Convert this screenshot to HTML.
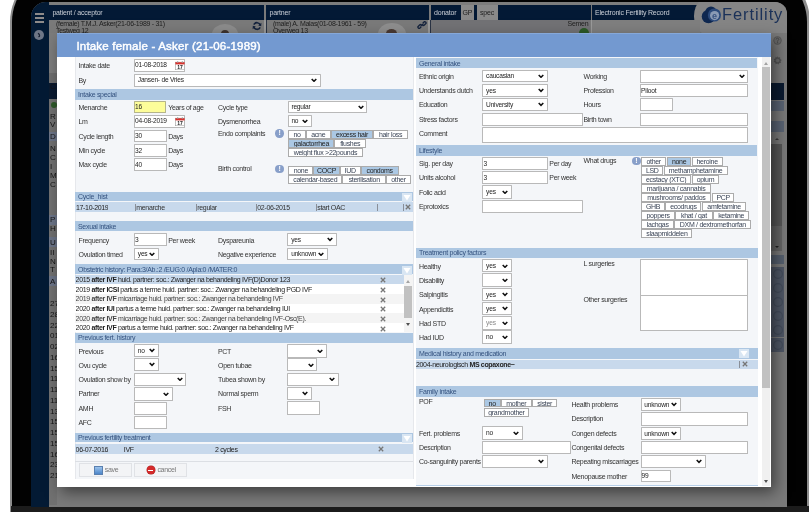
<!DOCTYPE html><html><head><meta charset="utf-8"><style>
*{margin:0;padding:0;box-sizing:border-box}
html,body{width:809px;height:512px;overflow:hidden;background:#fff}
body{position:relative;font-family:"Liberation Sans",sans-serif;will-change:transform}
div{position:absolute}
svg{display:block}
.lb{font-size:7px;line-height:9px;color:#333;letter-spacing:-0.3px;white-space:nowrap}
.sel,.inp{background:#fff;border:1px solid #b9b9b9;border-radius:0.5px}
.sel .it,.inp .it{position:absolute;left:0.1px;top:50%;margin-top:-4.7px;font-size:6.6px;line-height:9px;color:#222;letter-spacing:-0.2px;white-space:nowrap}
.sel .it{left:2.8px}
.chev{position:absolute;right:2.6px;top:50%;margin-top:-2.2px}
.hdr{background:#adc7e2}
.hdr .ht{position:absolute;left:3px;top:50%;margin-top:-4.5px;font-size:7px;line-height:9px;color:#34527f;letter-spacing:-0.3px;white-space:nowrap}
.tag{background:#fff;border:1px solid #ababab;font-size:7px;line-height:7px;color:#3a4456;text-align:center;letter-spacing:-0.3px;white-space:nowrap;overflow:hidden}
.tag.sel1{background:#abc8e4;color:#222}
.info{width:8.4px;height:8.4px;border-radius:50%;background:#889fc9;color:#fff;font-size:7px;line-height:8.4px;font-weight:700;text-align:center}
.row{font-size:7px;line-height:9px;color:#222;letter-spacing:-0.34px;white-space:nowrap;overflow:hidden}
.row b{font-weight:700}
</style></head><body>
<div style="left:10.2px;top:-33px;width:800px;height:600px;background:#8d8d8d;border-radius:55px"></div>
<div style="left:12.4px;top:-31px;width:794.3px;height:596px;background:#020202;border-radius:53px"></div>
<div style="left:11px;top:506px;width:798px;height:6px;background:#1c1c1c"></div>
<div style="left:31px;top:2px;width:756px;height:505px;background:#7a7a7a;border-radius:15px 12px 0 0;overflow:hidden"><div style="left:0;top:0;width:18px;height:505px;background:#031a34"></div></div>
<div style="left:34.6px;top:13px;width:9.4px;height:2px;background:#8e8b8a"></div>
<div style="left:34.6px;top:17px;width:9.4px;height:2px;background:#8e8b8a"></div>
<div style="left:34.6px;top:21px;width:9.4px;height:2px;background:#8e8b8a"></div>
<div style="left:34px;top:30px;width:9.8px;height:9.8px;border-radius:50%;background:#6e7686"><svg width="10" height="10" viewBox="0 0 10 10"><path d="M4 3.2 Q6.2 4.6 5.4 6.6 L4.2 6.8" fill="none" stroke="#1a2233" stroke-width="1.1"/></svg></div>
<div style="left:49px;top:2px;width:726px;height:2.5px;background:#7d7d7d"></div>
<div style="left:49px;top:4.5px;width:215px;height:15.5px;background:#031935"></div>
<div style="left:266px;top:4.5px;width:163px;height:15.5px;background:#031935"></div>
<div style="left:431px;top:4.5px;width:30px;height:15.5px;background:#031935"></div>
<div style="left:474.2px;top:4.5px;width:3.2px;height:15.5px;background:#031935"></div>
<div style="left:498px;top:4.5px;width:92.5px;height:15.5px;background:#031935"></div>
<div style="left:592px;top:4.5px;width:120px;height:15.5px;background:#031935"></div>
<div style="left:660px;top:2px;width:127px;height:40px;overflow:hidden;border-radius:0 12px 0 0"><div style="left:34.4px;top:-7.6px;width:43.2px;height:43.2px;border-radius:50%;background:#858585"></div><div style="left:56px;top:0;width:71px;height:31px;background:#858585"></div></div>
<div style="left:461px;top:4.5px;width:13.2px;height:15.5px;background:#898989"></div>
<div style="left:477.4px;top:4.5px;width:20.6px;height:15.5px;background:#898989"></div>
<div style="left:52.4px;top:8px;font-size:7px;line-height:9px;color:#c9ced6;letter-spacing:-0.2px;white-space:nowrap">patient / acceptor</div>
<div style="left:269.5px;top:8px;font-size:7px;line-height:9px;color:#c9ced6;letter-spacing:-0.2px;white-space:nowrap">partner</div>
<div style="left:434px;top:8px;font-size:7px;line-height:9px;color:#c9ced6;letter-spacing:-0.2px;white-space:nowrap">donator</div>
<div style="left:462.5px;top:8px;font-size:7px;line-height:9px;color:#c9ced6;letter-spacing:-0.2px;white-space:nowrap;color:#1d1d1d">GP</div>
<div style="left:480px;top:8px;font-size:7px;line-height:9px;color:#c9ced6;letter-spacing:-0.2px;white-space:nowrap;color:#1d1d1d">spec</div>
<div style="left:595px;top:8px;font-size:7px;line-height:9px;color:#c9ced6;letter-spacing:-0.2px;white-space:nowrap">Electronic Fertility Record</div>
<div style="left:700px;top:4px;width:24px;height:22px"><svg width="24" height="22" viewBox="0 0 24 22"><circle cx="8.5" cy="12.5" r="6.8" fill="#0f2850"/><circle cx="11" cy="8" r="5.6" fill="#0f2850"/><circle cx="14.4" cy="11" r="6.6" fill="#2c4a7a"/><circle cx="14.6" cy="11.6" r="4.6" fill="#8a9ab4"/><text x="14.6" y="14.6" font-size="9" font-family="Liberation Sans" font-weight="700" fill="#3b5582" text-anchor="middle">e</text></svg></div>
<div style="left:722px;top:3.5px;font-size:16.5px;line-height:20px;color:#1b3158;letter-spacing:0.9px;white-space:nowrap">Fertility</div>
<div style="left:431.2px;top:20px;width:159.3px;height:13px;background:#727275"></div>
<div style="left:592px;top:20px;width:108px;height:13px;background:#7f7f7f"></div>
<div style="left:56px;top:19.8px;font-size:7px;line-height:7px;color:#1e1e1e;letter-spacing:-0.3px;white-space:nowrap">(female) T.M.J. Asker(21-06-1989 - 31)</div>
<div style="left:56px;top:26.5px;font-size:7px;line-height:7px;color:#1e1e1e;letter-spacing:-0.3px;white-space:nowrap">Testweg 12</div>
<div style="left:273px;top:19.8px;font-size:7px;line-height:7px;color:#1e1e1e;letter-spacing:-0.3px;white-space:nowrap">(male) A. Malas(01-08-1961 - 59)</div>
<div style="left:273px;top:26.5px;font-size:7px;line-height:7px;color:#1e1e1e;letter-spacing:-0.3px;white-space:nowrap">Overweg 13</div>
<div style="left:567.6px;top:19.8px;font-size:7px;line-height:7px;color:#1e1e1e;letter-spacing:-0.3px;white-space:nowrap">Semen</div>
<div style="left:264px;top:20px;width:1.5px;height:13px;background:#9a9a9a"></div>
<div style="left:265.5px;top:20px;width:1px;height:13px;background:#2a3344"></div>
<div style="left:428.2px;top:20px;width:1.8px;height:13px;background:#9a9a9a"></div>
<div style="left:430px;top:20px;width:1.2px;height:13px;background:#2a3344"></div>
<div style="left:590.5px;top:20px;width:1.5px;height:13px;background:#9a9a9a"></div>
<div style="left:579px;top:28px;width:10px;height:10px;border-radius:50%;background:#2c5a28"></div>
<div style="left:252.2px;top:21.1px;width:10px;height:10px"><svg width="10" height="10" viewBox="0 0 10 10"><path d="M8.3 4.2 A3.5 3.5 0 0 0 1.8 3.6" fill="none" stroke="#15233d" stroke-width="1.6"/><path d="M1.7 5.8 A3.5 3.5 0 0 0 8.2 6.4" fill="none" stroke="#15233d" stroke-width="1.6"/><path d="M9.4 1.8 L9.2 5.2 L6.2 4.4 Z" fill="#15233d"/><path d="M0.6 8.2 L0.8 4.8 L3.8 5.6 Z" fill="#15233d"/></svg></div>
<div style="left:417.3px;top:20.4px;width:10px;height:10px"><svg width="10" height="10" viewBox="0 0 10 10"><path d="M4.2 6.8 L2.6 8.4 A1.6 1.6 0 0 1 0.9 6.7 L2.8 4.8 A1.6 1.6 0 0 1 4.6 4.9" fill="none" stroke="#15233d" stroke-width="1.4"/><path d="M5.8 3.2 L7.4 1.6 A1.6 1.6 0 0 1 9.1 3.3 L7.2 5.2 A1.6 1.6 0 0 1 5.4 5.1" fill="none" stroke="#15233d" stroke-width="1.4"/><path d="M3.6 6.4 L6.4 3.6" stroke="#15233d" stroke-width="1.2"/></svg></div>
<div style="left:212px;top:24px;width:26px;height:20px;border-radius:50%;background:#8c8c8c"></div>
<div style="left:220.8px;top:29.8px;width:8px;height:8px;border-radius:50%;background:#3e3430"></div>
<div style="left:378px;top:23px;width:28px;height:22px;border-radius:50%;background:#8e8e8e"></div>
<div style="left:385.6px;top:29.1px;width:11.4px;height:9px;border-radius:50%;background:#4a3a34"></div>
<div style="left:772.6px;top:36.2px;width:9px;height:9px"><svg width="9" height="9" viewBox="0 0 9 9"><circle cx="4.5" cy="4.5" r="4.2" fill="#585858"/><circle cx="4.5" cy="4.5" r="3.2" fill="#6c6c6c"/><path d="M3.2 3.4 Q3.3 2.2 4.5 2.2 Q5.8 2.2 5.8 3.4 Q5.8 4.2 4.6 4.7 L4.6 5.6" fill="none" stroke="#4a4a4a" stroke-width="1"/><circle cx="4.6" cy="6.7" r="0.6" fill="#4a4a4a"/></svg></div>
<div style="left:772.6px;top:55.7px;width:9px;height:9px"><svg width="9" height="9" viewBox="0 0 9 9"><path d="M4.5 0.3 L5.4 1.6 L7.1 1.3 L7.2 3 L8.7 3.9 L7.6 5.2 L8.1 6.8 L6.4 7 L5.5 8.5 L4.2 7.5 L2.6 8.2 L2.2 6.5 L0.6 5.9 L1.4 4.4 L0.6 2.9 L2.3 2.4 L2.6 0.8 L4 1.4 Z" fill="#555"/><circle cx="4.5" cy="4.5" r="1.8" fill="#6e6e6e"/></svg></div>
<div style="left:771px;top:82.5px;width:12.5px;height:17px;background:#0a1a30"></div>
<div style="left:771px;top:100.7px;width:12.5px;height:10px;background:#5a6474"></div>
<div style="left:771px;top:121px;width:12.5px;height:11px;background:#5a6474"></div>
<div style="left:774.5px;top:137.5px;width:0;height:0;border-left:2.5px solid transparent;border-right:2.5px solid transparent;border-bottom:2.5px solid #3a3a3a"></div>
<div style="left:771px;top:143.7px;width:10.5px;height:82.3px;background:#575757"></div>
<div style="left:771px;top:226px;width:10.5px;height:25px;background:#666"></div>
<div style="left:774.5px;top:246px;width:0;height:0;border-left:2.5px solid transparent;border-right:2.5px solid transparent;border-top:2.5px solid #222"></div>
<div style="left:771px;top:254.5px;width:12.5px;height:9.5px;background:#56606f"></div>
<div style="left:771px;top:267.0px;width:12.5px;height:14px;background:#4f5766"><div style="left:2px;top:2px;width:10px;height:10px;border-radius:50%;box-shadow:inset 0 0 0 1.2px #444d5c"></div></div>
<div style="left:771px;top:281.1px;width:12.5px;height:14px;background:#4f5766"><div style="left:2px;top:2px;width:10px;height:10px;border-radius:50%;box-shadow:inset 0 0 0 1.2px #444d5c"></div></div>
<div style="left:771px;top:295.2px;width:12.5px;height:14px;background:#4f5766"><div style="left:2px;top:2px;width:10px;height:10px;border-radius:50%;box-shadow:inset 0 0 0 1.2px #444d5c"></div></div>
<div style="left:771px;top:309.3px;width:12.5px;height:14px;background:#4f5766"><div style="left:2px;top:2px;width:10px;height:10px;border-radius:50%;box-shadow:inset 0 0 0 1.2px #444d5c"></div></div>
<div style="left:771px;top:323.4px;width:12.5px;height:14px;background:#4f5766"><div style="left:2px;top:2px;width:10px;height:10px;border-radius:50%;box-shadow:inset 0 0 0 1.2px #444d5c"></div></div>
<div style="left:771px;top:337.5px;width:12.5px;height:14px;background:#4f5766"><div style="left:2px;top:2px;width:10px;height:10px;border-radius:50%;box-shadow:inset 0 0 0 1.2px #444d5c"></div></div>
<div style="left:783.5px;top:60px;width:3.5px;height:445px;background:#7a7a7a"></div>
<div style="left:49px;top:33px;width:8px;height:40px;background:#7c7c7c"></div>
<div style="left:49px;top:73px;width:8px;height:9.5px;background:#6e6e6e"></div>
<div style="left:49px;top:82.5px;width:8px;height:16px;background:#0a1a30"></div>
<div style="left:49px;top:99px;width:8px;height:406px;background:#717171"></div>
<div style="left:50.5px;top:101.5px;width:6px;height:6px;border-radius:50%;background:#2f5a2a"></div>
<div style="left:49px;top:131.5px;width:8px;height:9.5px;background:#6c7588"></div>
<div style="left:49px;top:215px;width:8px;height:9.5px;background:#6c7588"></div>
<div style="left:49px;top:237.4px;width:8px;height:9.5px;background:#6c7588"></div>
<div style="left:49px;top:276px;width:8px;height:9.5px;background:#6c7588"></div>
<div style="left:49px;top:33px;width:8px;height:472px;overflow:hidden"><div style="left:1px;top:48.5px;font-size:8px;line-height:9px;color:#151515;white-space:nowrap">C</div><div style="left:1px;top:78.5px;font-size:8px;line-height:9px;color:#151515;white-space:nowrap">R</div><div style="left:1px;top:86.5px;font-size:8px;line-height:9px;color:#151515;white-space:nowrap">V</div><div style="left:1px;top:98.5px;font-size:8px;line-height:9px;color:#151515;white-space:nowrap">D</div><div style="left:1px;top:110.5px;font-size:8px;line-height:9px;color:#151515;white-space:nowrap">N</div><div style="left:1px;top:119.5px;font-size:8px;line-height:9px;color:#151515;white-space:nowrap">C</div><div style="left:1px;top:128.5px;font-size:8px;line-height:9px;color:#151515;white-space:nowrap">I</div><div style="left:1px;top:137.5px;font-size:8px;line-height:9px;color:#151515;white-space:nowrap">M</div><div style="left:1px;top:146.5px;font-size:8px;line-height:9px;color:#151515;white-space:nowrap">C</div><div style="left:1px;top:182.2px;font-size:8px;line-height:9px;color:#151515;white-space:nowrap">P</div><div style="left:1px;top:190.5px;font-size:8px;line-height:9px;color:#151515;white-space:nowrap">H</div><div style="left:1px;top:204.5px;font-size:8px;line-height:9px;color:#151515;white-space:nowrap">U</div><div style="left:1px;top:214.5px;font-size:8px;line-height:9px;color:#151515;white-space:nowrap">II</div><div style="left:1px;top:223.5px;font-size:8px;line-height:9px;color:#151515;white-space:nowrap">N</div><div style="left:1px;top:231.5px;font-size:8px;line-height:9px;color:#151515;white-space:nowrap">T</div><div style="left:1px;top:243.5px;font-size:8px;line-height:9px;color:#151515;white-space:nowrap">A</div><div style="left:1px;top:266.0px;font-size:8px;line-height:9px;color:#151515;white-space:nowrap">27</div><div style="left:1px;top:276.75px;font-size:8px;line-height:9px;color:#151515;white-space:nowrap">28</div><div style="left:1px;top:287.5px;font-size:8px;line-height:9px;color:#151515;white-space:nowrap">22</div><div style="left:1px;top:298.25px;font-size:8px;line-height:9px;color:#151515;white-space:nowrap">01</div><div style="left:1px;top:309.0px;font-size:8px;line-height:9px;color:#151515;white-space:nowrap">02</div><div style="left:1px;top:319.75px;font-size:8px;line-height:9px;color:#151515;white-space:nowrap">16</div><div style="left:1px;top:330.5px;font-size:8px;line-height:9px;color:#151515;white-space:nowrap">15</div><div style="left:1px;top:341.25px;font-size:8px;line-height:9px;color:#151515;white-space:nowrap">11</div><div style="left:1px;top:352.0px;font-size:8px;line-height:9px;color:#151515;white-space:nowrap">11</div><div style="left:1px;top:362.75px;font-size:8px;line-height:9px;color:#151515;white-space:nowrap">11</div><div style="left:1px;top:373.5px;font-size:8px;line-height:9px;color:#151515;white-space:nowrap">13</div><div style="left:1px;top:384.25px;font-size:8px;line-height:9px;color:#151515;white-space:nowrap">15</div><div style="left:1px;top:395.0px;font-size:8px;line-height:9px;color:#151515;white-space:nowrap">15</div><div style="left:1px;top:405.75px;font-size:8px;line-height:9px;color:#151515;white-space:nowrap">15</div><div style="left:1px;top:416.5px;font-size:8px;line-height:9px;color:#151515;white-space:nowrap">16</div><div style="left:1px;top:427.25px;font-size:8px;line-height:9px;color:#151515;white-space:nowrap">23</div><div style="left:1px;top:438.0px;font-size:8px;line-height:9px;color:#151515;white-space:nowrap">21</div></div>
<div style="left:57px;top:33.5px;width:714px;height:453.0px;background:#fff;box-shadow:4px 5px 14px rgba(0,0,0,0.5)"></div>
<div style="left:57px;top:33.2px;width:714px;height:23.8px;background:#7399d0;border-top:0.8px solid #86a8d8"></div>
<div style="left:76.4px;top:38.8px;font-size:11.5px;line-height:14px;font-weight:400;letter-spacing:0.2px;-webkit-text-stroke:0.45px #fff;color:#fff;white-space:nowrap">Intake female - Asker (21-06-1989)</div>
<div class="" style="left:75px;top:57px;width:338px;height:421.5px;background:#f4f6f9;border-left:1px solid #e6e8ec"></div>
<div class="" style="left:413px;top:57px;width:1px;height:421.5px;background:#e6e8ec"></div>
<div class="" style="left:416px;top:57px;width:341.5px;height:429.3px;background:#f4f6f9"></div>
<div class="lb" style="left:78.5px;top:61.0px;">Intake date</div>
<div class="inp" style="left:134px;top:58.6px;width:50.9px;height:13.1px;"><span class="it">01-08-2018</span></div>
<div style="left:174.6px;top:60.6px;width:10px;height:9px"><svg width="10" height="9" viewBox="0 0 10 9"><rect x="0.4" y="1.2" width="9.2" height="7.6" fill="#fff" stroke="#9a9a9a" stroke-width="0.6"/><rect x="0.4" y="1.2" width="9.2" height="2.2" fill="#d8322e"/><rect x="2.2" y="0.2" width="1" height="1.8" fill="#999"/><rect x="6.8" y="0.2" width="1" height="1.8" fill="#999"/><text x="5" y="8.2" font-size="5" font-family="Liberation Sans" font-weight="700" text-anchor="middle" fill="#222">17</text></svg></div>
<div class="lb" style="left:78.5px;top:75.5px;">By</div>
<div class="sel" style="left:134px;top:73.5px;width:186.5px;height:13.3px;"><span class="it">Jansen- de Vries</span><svg class="chev" width="6" height="4.5" viewBox="0 0 6 4.5"><path d="M0.7 0.9 L3 3.3 L5.3 0.9" fill="none" stroke="#111" stroke-width="1.5"/></svg></div>
<div class="hdr" style="left:75px;top:89px;width:338px;height:10.5px;"><span class="ht">Intake special</span></div>
<div class="lb" style="left:78.5px;top:102.5px;">Menarche</div>
<div class="inp" style="left:134px;top:100.5px;width:31.5px;height:12.3px;background:#fdfd9a;border-color:#b5b58a"><span class="it">16</span></div>
<div class="lb" style="left:168.2px;top:102.5px;">Years of age</div>
<div class="lb" style="left:78.5px;top:117.2px;">Lm</div>
<div class="inp" style="left:134px;top:114.5px;width:50.9px;height:13.3px;"><span class="it">04-08-2019</span></div>
<div style="left:174.6px;top:116.5px;width:10px;height:9px"><svg width="10" height="9" viewBox="0 0 10 9"><rect x="0.4" y="1.2" width="9.2" height="7.6" fill="#fff" stroke="#9a9a9a" stroke-width="0.6"/><rect x="0.4" y="1.2" width="9.2" height="2.2" fill="#d8322e"/><rect x="2.2" y="0.2" width="1" height="1.8" fill="#999"/><rect x="6.8" y="0.2" width="1" height="1.8" fill="#999"/><text x="5" y="8.2" font-size="5" font-family="Liberation Sans" font-weight="700" text-anchor="middle" fill="#222">17</text></svg></div>
<div class="lb" style="left:78.5px;top:131.5px;">Cycle length</div>
<div class="inp" style="left:134px;top:129.5px;width:32.5px;height:12.8px;"><span class="it">30</span></div>
<div class="lb" style="left:168.2px;top:131.5px;">Days</div>
<div class="lb" style="left:78.5px;top:145.9px;">Min cycle</div>
<div class="inp" style="left:134px;top:143.7px;width:32.5px;height:13.3px;"><span class="it">32</span></div>
<div class="lb" style="left:168.2px;top:145.9px;">Days</div>
<div class="lb" style="left:78.5px;top:160.0px;">Max cycle</div>
<div class="inp" style="left:134px;top:158.0px;width:32.5px;height:13.3px;"><span class="it">40</span></div>
<div class="lb" style="left:168.2px;top:160.0px;">Days</div>
<div class="lb" style="left:218px;top:102.5px;">Cycle type</div>
<div class="sel" style="left:287.6px;top:100.5px;width:79.9px;height:12.8px;"><span class="it">regular</span><svg class="chev" width="6" height="4.5" viewBox="0 0 6 4.5"><path d="M0.7 0.9 L3 3.3 L5.3 0.9" fill="none" stroke="#111" stroke-width="1.5"/></svg></div>
<div class="lb" style="left:218px;top:116.5px;">Dysmenorrhea</div>
<div class="sel" style="left:287.6px;top:114.5px;width:24.4px;height:12.8px;"><span class="it">no</span><svg class="chev" width="6" height="4.5" viewBox="0 0 6 4.5"><path d="M0.7 0.9 L3 3.3 L5.3 0.9" fill="none" stroke="#111" stroke-width="1.5"/></svg></div>
<div class="lb" style="left:218px;top:128.5px;">Endo complaints</div>
<div class="info" style="left:275.40000000000003px;top:129.3px">!</div>
<div class="tag" style="left:288.4px;top:130.4px;width:17.4px;height:8.6px;">no</div>
<div class="tag" style="left:305.8px;top:130.4px;width:24.9px;height:8.6px;">acne</div>
<div class="tag sel1" style="left:330.7px;top:130.4px;width:42.5px;height:8.6px;">excess hair</div>
<div class="tag" style="left:373.2px;top:130.4px;width:34.8px;height:8.6px;">hair loss</div>
<div class="tag sel1" style="left:288.4px;top:139.3px;width:46.0px;height:8.6px;">galactorrhea</div>
<div class="tag" style="left:334.4px;top:139.3px;width:31.6px;height:8.6px;">flushes</div>
<div class="tag" style="left:288.4px;top:148.4px;width:74.2px;height:8.6px;">weight flux &gt;22pounds</div>
<div class="lb" style="left:218px;top:164.0px;">Birth control</div>
<div class="info" style="left:275.40000000000003px;top:165.10000000000002px">!</div>
<div class="tag" style="left:288.4px;top:166.2px;width:24.9px;height:8.6px;">none</div>
<div class="tag sel1" style="left:313.3px;top:166.2px;width:26.5px;height:8.6px;">COCP</div>
<div class="tag" style="left:339.8px;top:166.2px;width:20.8px;height:8.6px;">IUD</div>
<div class="tag sel1" style="left:360.6px;top:166.2px;width:38.1px;height:8.6px;">condoms</div>
<div class="tag" style="left:288.4px;top:175.1px;width:53.8px;height:8.6px;">calendar-based</div>
<div class="tag" style="left:342.2px;top:175.1px;width:44.0px;height:8.6px;">sterilisation</div>
<div class="tag" style="left:386.2px;top:175.1px;width:24.5px;height:8.6px;">other</div>
<div class="hdr" style="left:75px;top:191.5px;width:338px;height:9.5px;"><span class="ht">Cycle_hist</span></div>
<div class="filt" style="left:402px;top:192.5px"><svg width="10" height="9" viewBox="0 0 10 9"><rect x="0" y="0" width="10" height="9" fill="#d9e6f3"/><path d="M1.5 2 L8.5 2 L5 7.5 Z" fill="#fff"/></svg></div>
<div class="" style="left:75px;top:202.2px;width:338px;height:9.4px;background:#c8d9ec"></div>
<div class="row" style="left:76px;top:202.7px">17-10-2019</div>
<div style="left:135px;top:203.5px;width:0.8px;height:7px;background:#8a8f98"></div>
<div class="row" style="left:136.3px;top:202.5px;color:#333">menarche</div>
<div style="left:196px;top:203.5px;width:0.8px;height:7px;background:#8a8f98"></div>
<div class="row" style="left:197.3px;top:202.5px;color:#333">regular</div>
<div style="left:256px;top:203.5px;width:0.8px;height:7px;background:#8a8f98"></div>
<div class="row" style="left:257.3px;top:202.5px;color:#333">02-06-2015</div>
<div style="left:316px;top:203.5px;width:0.8px;height:7px;background:#8a8f98"></div>
<div class="row" style="left:317.3px;top:202.5px;color:#333">start OAC</div>
<div style="left:377px;top:203.5px;width:0.8px;height:7px;background:#8a8f98"></div>
<div style="left:403px;top:203.5px;width:0.8px;height:7px;background:#8a8f98"></div>
<div style="left:404.5px;top:204.2px;width:6px;height:6px"><svg width="6" height="6" viewBox="0 0 6 6"><path d="M0.8 0.8 L5.2 5.2 M5.2 0.8 L0.8 5.2" stroke="#777" stroke-width="1.3"/></svg></div>
<div class="hdr" style="left:75px;top:220.9px;width:338px;height:10.5px;"><span class="ht">Sexual intake</span></div>
<div class="lb" style="left:78.5px;top:235.5px;">Frequency</div>
<div class="inp" style="left:134px;top:233.2px;width:32.5px;height:13.1px;"><span class="it">3</span></div>
<div class="lb" style="left:168.2px;top:235.5px;">Per week</div>
<div class="lb" style="left:78.5px;top:249.5px;">Ovulation timed</div>
<div class="sel" style="left:134px;top:247.5px;width:24.9px;height:12.8px;"><span class="it">yes</span><svg class="chev" width="6" height="4.5" viewBox="0 0 6 4.5"><path d="M0.7 0.9 L3 3.3 L5.3 0.9" fill="none" stroke="#111" stroke-width="1.5"/></svg></div>
<div class="lb" style="left:218px;top:235.5px;">Dyspareunia</div>
<div class="sel" style="left:287.4px;top:233.0px;width:49.5px;height:13.3px;"><span class="it">yes</span><svg class="chev" width="6" height="4.5" viewBox="0 0 6 4.5"><path d="M0.7 0.9 L3 3.3 L5.3 0.9" fill="none" stroke="#111" stroke-width="1.5"/></svg></div>
<div class="lb" style="left:218px;top:249.5px;">Negative experience</div>
<div class="sel" style="left:287.4px;top:247.5px;width:40.6px;height:12.8px;"><span class="it">unknown</span><svg class="chev" width="6" height="4.5" viewBox="0 0 6 4.5"><path d="M0.7 0.9 L3 3.3 L5.3 0.9" fill="none" stroke="#111" stroke-width="1.5"/></svg></div>
<div class="hdr" style="left:75px;top:264px;width:338px;height:10px;"><span class="ht">Obstetric history: Para:3/Ab.:2 /EUG:0 /Apla:0 /MATER:0</span></div>
<div class="filt" style="left:402px;top:265.5px"><svg width="10" height="9" viewBox="0 0 10 9"><rect x="0" y="0" width="10" height="9" fill="#d9e6f3"/><path d="M1.5 2 L8.5 2 L5 7.5 Z" fill="#fff"/></svg></div>
<div class="" style="left:75px;top:274.6px;width:329px;height:9.65px;background:#c8d9ec"></div>
<div class="row" style="left:75.6px;top:275.1px;width:300px;color:#222">2015 <b>after IVF</b> huid. partner: soc.: Zwanger na behandeling IVF(D)Donor 123</div>
<div style="left:379.6px;top:277.40000000000003px;width:6px;height:6px"><svg width="6" height="6" viewBox="0 0 6 6"><path d="M0.8 0.8 L5.2 5.2 M5.2 0.8 L0.8 5.2" stroke="#777" stroke-width="1.3"/></svg></div>
<div class="" style="left:75px;top:284.25px;width:329px;height:9.65px;background:#fff"></div>
<div class="row" style="left:75.6px;top:284.75px;width:300px;color:#222">2019 <b>after ICSI</b> partus a terme huid. partner: soc.: Zwanger na behandeling PGD IVF</div>
<div style="left:379.6px;top:287.05px;width:6px;height:6px"><svg width="6" height="6" viewBox="0 0 6 6"><path d="M0.8 0.8 L5.2 5.2 M5.2 0.8 L0.8 5.2" stroke="#777" stroke-width="1.3"/></svg></div>
<div class="" style="left:75px;top:293.9px;width:329px;height:9.65px;background:#f4f4f4"></div>
<div class="row" style="left:75.6px;top:294.4px;width:300px;color:#444">2019 <b>after IVF</b> micarriage huid. partner: soc.: Zwanger na behandeling IVF</div>
<div style="left:379.6px;top:296.7px;width:6px;height:6px"><svg width="6" height="6" viewBox="0 0 6 6"><path d="M0.8 0.8 L5.2 5.2 M5.2 0.8 L0.8 5.2" stroke="#777" stroke-width="1.3"/></svg></div>
<div class="" style="left:75px;top:303.54999999999995px;width:329px;height:9.65px;background:#fff"></div>
<div class="row" style="left:75.6px;top:304.04999999999995px;width:300px;color:#222">2020 <b>after IUI</b> partus a terme huid. partner: soc.: Zwanger na behandeling IUI</div>
<div style="left:379.6px;top:306.34999999999997px;width:6px;height:6px"><svg width="6" height="6" viewBox="0 0 6 6"><path d="M0.8 0.8 L5.2 5.2 M5.2 0.8 L0.8 5.2" stroke="#777" stroke-width="1.3"/></svg></div>
<div class="" style="left:75px;top:313.19999999999993px;width:329px;height:9.65px;background:#f4f4f4"></div>
<div class="row" style="left:75.6px;top:313.69999999999993px;width:300px;color:#444">2020 <b>after IVF</b> micarriage huid. partner: soc.: Zwanger na behandeling IVF-Osc(E).</div>
<div style="left:379.6px;top:315.99999999999994px;width:6px;height:6px"><svg width="6" height="6" viewBox="0 0 6 6"><path d="M0.8 0.8 L5.2 5.2 M5.2 0.8 L0.8 5.2" stroke="#777" stroke-width="1.3"/></svg></div>
<div class="" style="left:75px;top:322.8499999999999px;width:329px;height:9.65px;background:#fff"></div>
<div class="row" style="left:75.6px;top:323.3499999999999px;width:300px;color:#222">2020 <b>after IVF</b> partus a terme huid. partner: soc.: Zwanger na behandeling IVF</div>
<div style="left:379.6px;top:325.6499999999999px;width:6px;height:6px"><svg width="6" height="6" viewBox="0 0 6 6"><path d="M0.8 0.8 L5.2 5.2 M5.2 0.8 L0.8 5.2" stroke="#777" stroke-width="1.3"/></svg></div>
<div class="" style="left:403.5px;top:274.6px;width:9.0px;height:57.9px;background:#f4f4f4"></div>
<div class="" style="left:404.3px;top:286.2px;width:7.5px;height:31.5px;background:#c1c1c1"></div>
<div style="left:405.5px;top:279.5px;width:0;height:0;border-left:2.5px solid transparent;border-right:2.5px solid transparent;border-bottom:3px solid #a3a3a3"></div>
<div style="left:405.5px;top:323px;width:0;height:0;border-left:2.5px solid transparent;border-right:2.5px solid transparent;border-top:3px solid #505050"></div>
<div class="hdr" style="left:75px;top:332.5px;width:338px;height:10.3px;"><span class="ht">Previous fert. history</span></div>
<div class="lb" style="left:78.5px;top:346.5px;">Previous</div>
<div class="sel" style="left:134px;top:343.8px;width:24.9px;height:13.6px;"><span class="it">no</span><svg class="chev" width="6" height="4.5" viewBox="0 0 6 4.5"><path d="M0.7 0.9 L3 3.3 L5.3 0.9" fill="none" stroke="#111" stroke-width="1.5"/></svg></div>
<div class="lb" style="left:78.5px;top:360.8px;">Ovu cycle</div>
<div class="sel" style="left:134px;top:358.0px;width:24.9px;height:13.3px;"><span class="it"></span><svg class="chev" width="6" height="4.5" viewBox="0 0 6 4.5"><path d="M0.7 0.9 L3 3.3 L5.3 0.9" fill="none" stroke="#111" stroke-width="1.5"/></svg></div>
<div class="lb" style="left:78.5px;top:374.9px;">Ovulation show by</div>
<div class="sel" style="left:134px;top:372.5px;width:52.1px;height:13.3px;"><span class="it"></span><svg class="chev" width="6" height="4.5" viewBox="0 0 6 4.5"><path d="M0.7 0.9 L3 3.3 L5.3 0.9" fill="none" stroke="#111" stroke-width="1.5"/></svg></div>
<div class="lb" style="left:78.5px;top:389.2px;">Partner</div>
<div class="sel" style="left:134px;top:386.5px;width:39.0px;height:14.8px;"><span class="it"></span><svg class="chev" width="6" height="4.5" viewBox="0 0 6 4.5"><path d="M0.7 0.9 L3 3.3 L5.3 0.9" fill="none" stroke="#111" stroke-width="1.5"/></svg></div>
<div class="lb" style="left:78.5px;top:403.5px;">AMH</div>
<div class="inp" style="left:134px;top:401.5px;width:32.5px;height:13.1px;"><span class="it"></span></div>
<div class="lb" style="left:78.5px;top:417.7px;">AFC</div>
<div class="inp" style="left:134px;top:416.1px;width:32.5px;height:12.8px;"><span class="it"></span></div>
<div class="lb" style="left:218px;top:346.5px;">PCT</div>
<div class="sel" style="left:287.3px;top:343.9px;width:39.7px;height:13.7px;"><span class="it"></span><svg class="chev" width="6" height="4.5" viewBox="0 0 6 4.5"><path d="M0.7 0.9 L3 3.3 L5.3 0.9" fill="none" stroke="#111" stroke-width="1.5"/></svg></div>
<div class="lb" style="left:218px;top:360.8px;">Open tubae</div>
<div class="sel" style="left:287.3px;top:358.2px;width:29.8px;height:13.1px;"><span class="it"></span><svg class="chev" width="6" height="4.5" viewBox="0 0 6 4.5"><path d="M0.7 0.9 L3 3.3 L5.3 0.9" fill="none" stroke="#111" stroke-width="1.5"/></svg></div>
<div class="lb" style="left:218px;top:374.9px;">Tubea shown by</div>
<div class="sel" style="left:287.3px;top:372.5px;width:51.7px;height:13.3px;"><span class="it"></span><svg class="chev" width="6" height="4.5" viewBox="0 0 6 4.5"><path d="M0.7 0.9 L3 3.3 L5.3 0.9" fill="none" stroke="#111" stroke-width="1.5"/></svg></div>
<div class="lb" style="left:218px;top:389.2px;">Normal sperm</div>
<div class="sel" style="left:287.3px;top:387.0px;width:24.5px;height:13.3px;"><span class="it"></span><svg class="chev" width="6" height="4.5" viewBox="0 0 6 4.5"><path d="M0.7 0.9 L3 3.3 L5.3 0.9" fill="none" stroke="#111" stroke-width="1.5"/></svg></div>
<div class="lb" style="left:218px;top:403.5px;">FSH</div>
<div class="inp" style="left:287.3px;top:401.0px;width:32.7px;height:13.8px;"><span class="it"></span></div>
<div class="hdr" style="left:75px;top:432.6px;width:338px;height:9.9px;"><span class="ht">Previous fertility treatment</span></div>
<div class="filt" style="left:402px;top:433.5px"><svg width="10" height="9" viewBox="0 0 10 9"><rect x="0" y="0" width="10" height="9" fill="#d9e6f3"/><path d="M1.5 2 L8.5 2 L5 7.5 Z" fill="#fff"/></svg></div>
<div class="" style="left:75px;top:444.4px;width:338px;height:9.2px;background:#c8d9ec"></div>
<div class="row" style="left:75.6px;top:444.5px">06-07-2016</div>
<div class="row" style="left:123.8px;top:444.5px">IVF</div>
<div class="row" style="left:215px;top:444.5px">2 cycles</div>
<div style="left:378px;top:446px;width:6px;height:6px"><svg width="6" height="6" viewBox="0 0 6 6"><path d="M0.8 0.8 L5.2 5.2 M5.2 0.8 L0.8 5.2" stroke="#777" stroke-width="1.3"/></svg></div>
<div class="" style="left:75px;top:460.5px;width:338px;height:0.8px;background:#dcdfe4"></div>
<div class="" style="left:78.5px;top:463px;width:53.2px;height:13.6px;background:#f3f4f6;border:1px solid #e0e2e6"></div>
<div class="" style="left:134px;top:463px;width:53.3px;height:13.6px;background:#f3f4f6;border:1px solid #e0e2e6"></div>
<div style="left:94px;top:465.5px;width:9px;height:9px;background:linear-gradient(#9cc3ec,#4d86c9);border:0.5px solid #5a80b0"></div>
<div class="lb" style="left:104.8px;top:465.3px;color:#777">save</div>
<div style="left:146.5px;top:466px;width:8.4px;height:8.4px;border-radius:50%;background:#d42a2a;box-shadow:0 0 0 0.5px #a22"></div>
<div style="left:148.2px;top:469.5px;width:5px;height:1.4px;background:#fff"></div>
<div class="lb" style="left:157.4px;top:465.3px;color:#777">cancel</div>
<div class="hdr" style="left:416px;top:57.8px;width:341px;height:10.6px;"><span class="ht">General intake</span></div>
<div class="lb" style="left:419px;top:72.1px;">Ethnic origin</div>
<div class="sel" style="left:482.3px;top:69.8px;width:65.6px;height:12.5px;"><span class="it">caucasian</span><svg class="chev" width="6" height="4.5" viewBox="0 0 6 4.5"><path d="M0.7 0.9 L3 3.3 L5.3 0.9" fill="none" stroke="#111" stroke-width="1.5"/></svg></div>
<div class="lb" style="left:419px;top:86.2px;">Understands dutch</div>
<div class="sel" style="left:482.3px;top:84.0px;width:65.6px;height:13.0px;"><span class="it">yes</span><svg class="chev" width="6" height="4.5" viewBox="0 0 6 4.5"><path d="M0.7 0.9 L3 3.3 L5.3 0.9" fill="none" stroke="#111" stroke-width="1.5"/></svg></div>
<div class="lb" style="left:419px;top:100.3px;">Education</div>
<div class="sel" style="left:482.3px;top:98.1px;width:65.6px;height:12.9px;"><span class="it">University</span><svg class="chev" width="6" height="4.5" viewBox="0 0 6 4.5"><path d="M0.7 0.9 L3 3.3 L5.3 0.9" fill="none" stroke="#111" stroke-width="1.5"/></svg></div>
<div class="lb" style="left:419px;top:115.1px;">Stress factors</div>
<div class="inp" style="left:482.3px;top:112.7px;width:100.8px;height:13.1px;"><span class="it"></span></div>
<div class="lb" style="left:419px;top:129.1px;">Comment</div>
<div class="inp" style="left:482.3px;top:127.0px;width:266.0px;height:15.6px;"><span class="it"></span></div>
<div class="lb" style="left:583.5px;top:72.1px;">Working</div>
<div class="sel" style="left:640px;top:69.5px;width:108.3px;height:13.1px;"><span class="it"></span><svg class="chev" width="6" height="4.5" viewBox="0 0 6 4.5"><path d="M0.7 0.9 L3 3.3 L5.3 0.9" fill="none" stroke="#111" stroke-width="1.5"/></svg></div>
<div class="lb" style="left:583.5px;top:86.2px;">Profession</div>
<div class="inp" style="left:640px;top:84.0px;width:108.3px;height:13.0px;"><span class="it">Piloot</span></div>
<div class="lb" style="left:583.5px;top:100.3px;">Hours</div>
<div class="inp" style="left:640px;top:98.1px;width:33.0px;height:13.2px;"><span class="it"></span></div>
<div class="lb" style="left:583.5px;top:115.1px;">Birth town</div>
<div class="inp" style="left:640px;top:112.5px;width:108.3px;height:13.3px;"><span class="it"></span></div>
<div class="hdr" style="left:416px;top:144.6px;width:341px;height:11.0px;"><span class="ht">Lifestyle</span></div>
<div class="lb" style="left:419px;top:158.9px;">Sig. per day</div>
<div class="inp" style="left:482.3px;top:157.1px;width:65.6px;height:12.5px;"><span class="it">3</span></div>
<div class="lb" style="left:549.3px;top:158.9px;">Per day</div>
<div class="lb" style="left:419px;top:173.0px;">Units alcohol</div>
<div class="inp" style="left:482.3px;top:171.1px;width:65.6px;height:13.0px;"><span class="it">3</span></div>
<div class="lb" style="left:549.3px;top:173.0px;">Per week</div>
<div class="lb" style="left:419px;top:187.6px;">Folic acid</div>
<div class="sel" style="left:482.3px;top:185.3px;width:29.7px;height:13.6px;"><span class="it">yes</span><svg class="chev" width="6" height="4.5" viewBox="0 0 6 4.5"><path d="M0.7 0.9 L3 3.3 L5.3 0.9" fill="none" stroke="#111" stroke-width="1.5"/></svg></div>
<div class="lb" style="left:419px;top:201.9px;">Eprotoxics</div>
<div class="inp" style="left:482.3px;top:199.8px;width:100.8px;height:12.8px;"><span class="it"></span></div>
<div class="lb" style="left:583.5px;top:156.0px;">What drugs</div>
<div class="info" style="left:632.1999999999999px;top:156.8px">!</div>
<div class="tag" style="left:641.3px;top:157.3px;width:24.7px;height:8.7px;">other</div>
<div class="tag sel1" style="left:667px;top:157.3px;width:24.2px;height:8.7px;">none</div>
<div class="tag" style="left:691.7px;top:157.3px;width:30.9px;height:8.7px;">heroine</div>
<div class="tag" style="left:641.3px;top:166.3px;width:21.9px;height:8.7px;">LSD</div>
<div class="tag" style="left:663.6px;top:166.3px;width:64.0px;height:8.7px;">methamphetamine</div>
<div class="tag" style="left:641.3px;top:175.3px;width:49.7px;height:8.7px;">ecstacy (XTC)</div>
<div class="tag" style="left:691.7px;top:175.3px;width:27.5px;height:8.7px;">opium</div>
<div class="tag" style="left:641.3px;top:184.3px;width:69.7px;height:8.7px;">marijuana / cannabis</div>
<div class="tag" style="left:641.3px;top:193.3px;width:70.1px;height:8.7px;">mushrooms/ paddos</div>
<div class="tag" style="left:711.8px;top:193.3px;width:22.7px;height:8.7px;">PCP</div>
<div class="tag" style="left:641.3px;top:202.3px;width:23.6px;height:8.7px;">GHB</div>
<div class="tag" style="left:665.3px;top:202.3px;width:36.2px;height:8.7px;">ecodrugs</div>
<div class="tag" style="left:701.9px;top:202.3px;width:44.5px;height:8.7px;">amfetamine</div>
<div class="tag" style="left:641.3px;top:211.3px;width:33.5px;height:8.7px;">poppers</div>
<div class="tag" style="left:675.2px;top:211.3px;width:37.4px;height:8.7px;">khat / qat</div>
<div class="tag" style="left:713px;top:211.3px;width:36.3px;height:8.7px;">ketamine</div>
<div class="tag" style="left:641.3px;top:220.3px;width:32.7px;height:8.7px;">lachgas</div>
<div class="tag" style="left:674.4px;top:220.3px;width:76.9px;height:8.7px;">DXM / dextromethorfan</div>
<div class="tag" style="left:641.3px;top:229.3px;width:51.2px;height:8.7px;">slaapmiddelen</div>
<div class="hdr" style="left:416px;top:247.6px;width:341.5px;height:10.5px;"><span class="ht">Treatment policy factors</span></div>
<div class="lb" style="left:419px;top:261.9px;">Healthy</div>
<div class="sel" style="left:482.3px;top:259.09999999999997px;width:29.7px;height:13.4px;"><span class="it">yes</span><svg class="chev" width="6" height="4.5" viewBox="0 0 6 4.5"><path d="M0.7 0.9 L3 3.3 L5.3 0.9" fill="none" stroke="#111" stroke-width="1.5"/></svg></div>
<div class="lb" style="left:419px;top:276.17px;">Disability</div>
<div class="sel" style="left:482.3px;top:273.36999999999995px;width:29.7px;height:13.4px;"><span class="it"></span><svg class="chev" width="6" height="4.5" viewBox="0 0 6 4.5"><path d="M0.7 0.9 L3 3.3 L5.3 0.9" fill="none" stroke="#111" stroke-width="1.5"/></svg></div>
<div class="lb" style="left:419px;top:290.44px;">Salpingitis</div>
<div class="sel" style="left:482.3px;top:287.63999999999993px;width:29.7px;height:13.4px;"><span class="it">yes</span><svg class="chev" width="6" height="4.5" viewBox="0 0 6 4.5"><path d="M0.7 0.9 L3 3.3 L5.3 0.9" fill="none" stroke="#111" stroke-width="1.5"/></svg></div>
<div class="lb" style="left:419px;top:304.71px;">Appendicitis</div>
<div class="sel" style="left:482.3px;top:301.9099999999999px;width:29.7px;height:13.4px;"><span class="it">yes</span><svg class="chev" width="6" height="4.5" viewBox="0 0 6 4.5"><path d="M0.7 0.9 L3 3.3 L5.3 0.9" fill="none" stroke="#111" stroke-width="1.5"/></svg></div>
<div class="lb" style="left:419px;top:318.98px;">Had STD</div>
<div class="sel" style="left:482.3px;top:316.1799999999999px;width:29.7px;height:13.4px;"><span class="it"><span style='color:#888'>yes</span></span><svg class="chev" width="6" height="4.5" viewBox="0 0 6 4.5"><path d="M0.7 0.9 L3 3.3 L5.3 0.9" fill="none" stroke="#111" stroke-width="1.5"/></svg></div>
<div class="lb" style="left:419px;top:333.25px;">Had IUD</div>
<div class="sel" style="left:482.3px;top:330.4499999999999px;width:29.7px;height:13.4px;"><span class="it">no</span><svg class="chev" width="6" height="4.5" viewBox="0 0 6 4.5"><path d="M0.7 0.9 L3 3.3 L5.3 0.9" fill="none" stroke="#111" stroke-width="1.5"/></svg></div>
<div class="lb" style="left:583.5px;top:259.0px;">L surgeries</div>
<div class="inp" style="left:640px;top:259.1px;width:108.3px;height:37.1px;"><span class="it"></span></div>
<div class="lb" style="left:583.5px;top:294.8px;">Other surgeries</div>
<div class="inp" style="left:640px;top:294.9px;width:108.3px;height:35.9px;"><span class="it"></span></div>
<div class="hdr" style="left:416px;top:348px;width:341.5px;height:10.5px;"><span class="ht">Medical history and medication</span></div>
<div class="filt" style="left:739px;top:349.3px"><svg width="10" height="9" viewBox="0 0 10 9"><rect x="0" y="0" width="10" height="9" fill="#d9e6f3"/><path d="M1.5 2 L8.5 2 L5 7.5 Z" fill="#fff"/></svg></div>
<div class="" style="left:416px;top:359.8px;width:341.5px;height:8.9px;background:#c8d9ec"></div>
<div class="row" style="left:416px;top:359.8px">2004-neurologisch <b>MS copaxone~</b></div>
<div style="left:739.3px;top:360.5px;width:0.8px;height:7.5px;background:#8a8f98"></div>
<div style="left:742.2px;top:361.2px;width:6px;height:6px"><svg width="6" height="6" viewBox="0 0 6 6"><path d="M0.8 0.8 L5.2 5.2 M5.2 0.8 L0.8 5.2" stroke="#777" stroke-width="1.3"/></svg></div>
<div class="hdr" style="left:416px;top:386px;width:341.5px;height:10.6px;"><span class="ht">Family intake</span></div>
<div class="lb" style="left:419px;top:397.0px;">POF</div>
<div class="tag sel1" style="left:483.5px;top:398.5px;width:17.3px;height:8.7px;">no</div>
<div class="tag" style="left:500.8px;top:398.5px;width:31.0px;height:8.7px;">mother</div>
<div class="tag" style="left:531.8px;top:398.5px;width:25.7px;height:8.7px;">sister</div>
<div class="tag" style="left:483.5px;top:407.9px;width:45.8px;height:8.7px;">grandmother</div>
<div class="lb" style="left:419px;top:428.7px;">Fert. problems</div>
<div class="sel" style="left:482.3px;top:426.2px;width:40.5px;height:13.7px;"><span class="it">no</span><svg class="chev" width="6" height="4.5" viewBox="0 0 6 4.5"><path d="M0.7 0.9 L3 3.3 L5.3 0.9" fill="none" stroke="#111" stroke-width="1.5"/></svg></div>
<div class="lb" style="left:419px;top:442.8px;">Description</div>
<div class="inp" style="left:482.3px;top:440.5px;width:89.1px;height:13.3px;"><span class="it"></span></div>
<div class="lb" style="left:419px;top:457.4px;">Co-sanguinity parents</div>
<div class="sel" style="left:482.3px;top:455.0px;width:65.6px;height:13.3px;"><span class="it"></span><svg class="chev" width="6" height="4.5" viewBox="0 0 6 4.5"><path d="M0.7 0.9 L3 3.3 L5.3 0.9" fill="none" stroke="#111" stroke-width="1.5"/></svg></div>
<div class="lb" style="left:571.5px;top:400.0px;">Health problems</div>
<div class="sel" style="left:640.5px;top:397.7px;width:40.5px;height:13.1px;"><span class="it">unknown</span><svg class="chev" width="6" height="4.5" viewBox="0 0 6 4.5"><path d="M0.7 0.9 L3 3.3 L5.3 0.9" fill="none" stroke="#111" stroke-width="1.5"/></svg></div>
<div class="lb" style="left:571.5px;top:414.4px;">Description</div>
<div class="inp" style="left:640.5px;top:412.1px;width:107.6px;height:13.6px;"><span class="it"></span></div>
<div class="lb" style="left:571.5px;top:428.8px;">Congen defects</div>
<div class="sel" style="left:640.5px;top:426.5px;width:40.5px;height:13.4px;"><span class="it">unknown</span><svg class="chev" width="6" height="4.5" viewBox="0 0 6 4.5"><path d="M0.7 0.9 L3 3.3 L5.3 0.9" fill="none" stroke="#111" stroke-width="1.5"/></svg></div>
<div class="lb" style="left:571.5px;top:442.9px;">Congenital defects</div>
<div class="inp" style="left:640.5px;top:440.7px;width:107.6px;height:13.1px;"><span class="it"></span></div>
<div class="lb" style="left:571.5px;top:457.1px;">Repeating miscarriages</div>
<div class="sel" style="left:640.5px;top:455.0px;width:65.5px;height:13.3px;"><span class="it"></span><svg class="chev" width="6" height="4.5" viewBox="0 0 6 4.5"><path d="M0.7 0.9 L3 3.3 L5.3 0.9" fill="none" stroke="#111" stroke-width="1.5"/></svg></div>
<div class="lb" style="left:571.5px;top:471.5px;">Menopause mother</div>
<div class="inp" style="left:640.5px;top:469.5px;width:30.7px;height:12.8px;"><span class="it">99</span></div>
<div class="" style="left:416px;top:485px;width:341.5px;height:1.3px;background:#b7cfe8"></div>
<div class="" style="left:761.8px;top:57px;width:8.5px;height:429px;background:#f0f0f0"></div>
<div class="" style="left:762.2px;top:66.7px;width:7.8px;height:321.3px;background:#c1c1c1"></div>
<div style="left:763.5px;top:61.5px;width:0;height:0;border-left:2.7px solid transparent;border-right:2.7px solid transparent;border-bottom:3px solid #a3a3a3"></div>
<div style="left:763.5px;top:479.5px;width:0;height:0;border-left:2.7px solid transparent;border-right:2.7px solid transparent;border-top:3px solid #505050"></div>
</body></html>
